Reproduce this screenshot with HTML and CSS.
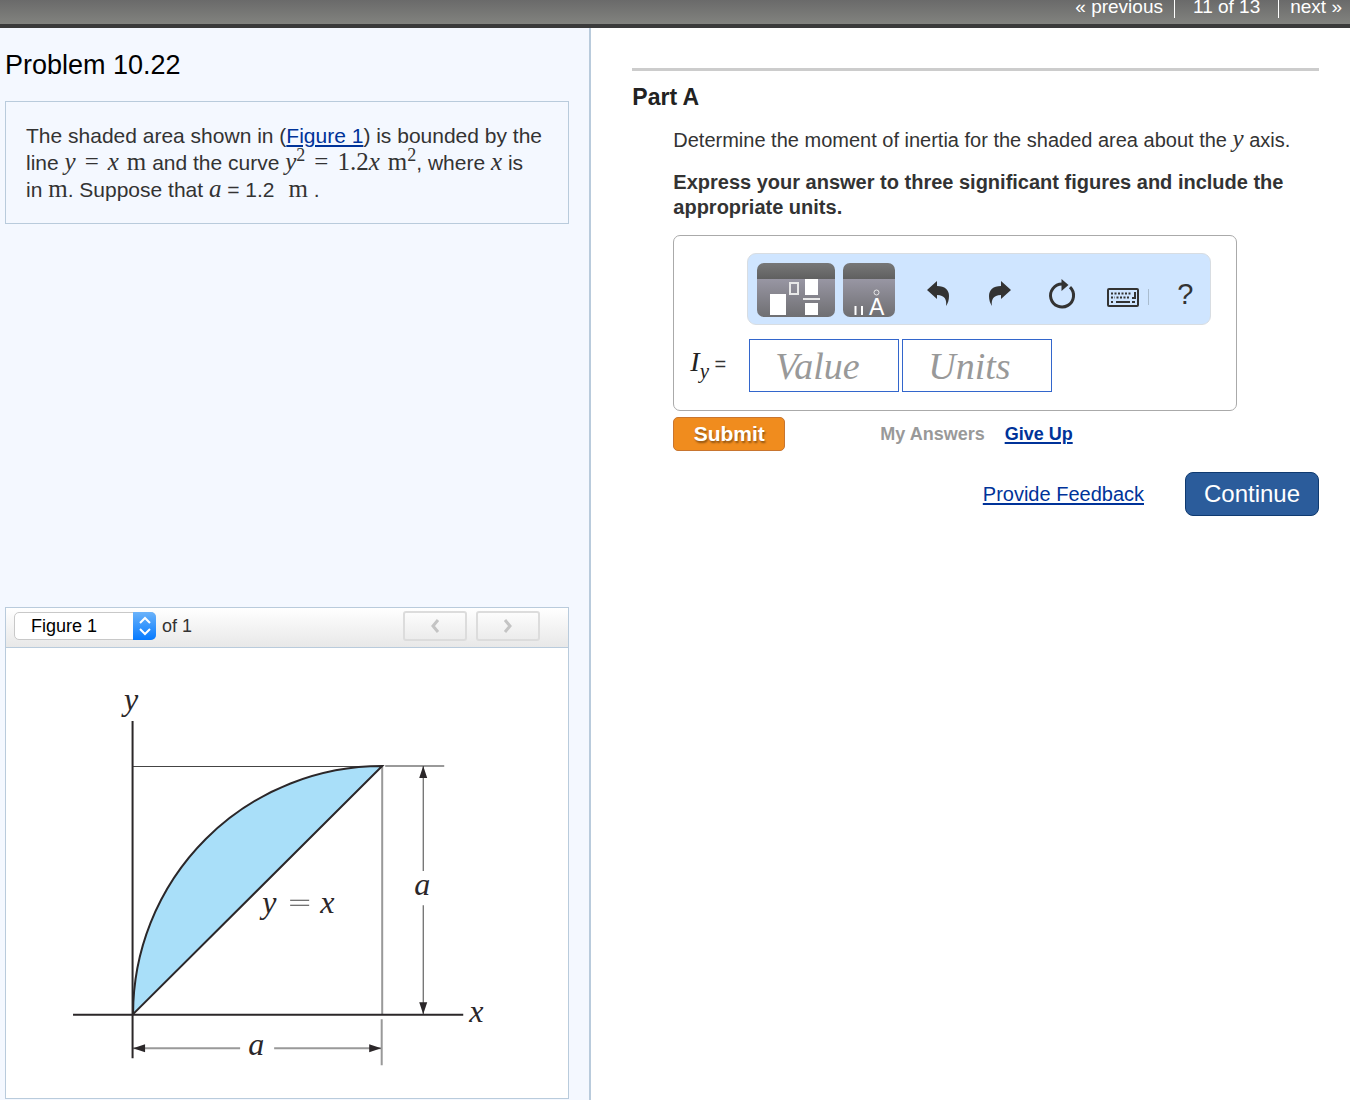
FILE: index.html
```html
<!DOCTYPE html>
<html lang="en">
  <head>
    <meta charset="UTF-8" />
    <meta name="viewport" content="width=device-width, initial-scale=1.0" />
    <title>Problem 10.22</title>
    <link rel="stylesheet" href="styles.css">
  </head>
  <body>
    <header class="top-bar">
      <nav class="pager">
        <a href="#">« previous</a>
        <span>11 of 13</span>
        <a href="#">next »</a>
      </nav>
    </header>

    <div class="layout">
      <aside class="problem-panel">
        <h1>Problem 10.22</h1>
        <div class="problem-text">
          The shaded area shown in (<a href="#figure">Figure 1</a>) is bounded by the
          line <span class="math"><i>y</i><span class="rel">=</span><i>x</i><span class="unit">m</span></span>
          and the curve <span class="math"><i>y</i><sup>2</sup><span class="rel">=</span>1.2<i>x</i><span class="unit">m</span><sup>2</sup></span>,
          where <i class="math">x</i> is in&nbsp;<span class="math">m</span>. Suppose that
          <i class="math">a</i> = 1.2 <span class="math unit">m</span> .
        </div>

        <section class="figure-box" id="figure">
          <div class="figure-bar">
            <div class="figure-select">
              <select aria-label="Figure">
                <option>Figure 1</option>
              </select>
              <svg class="select-arrows" width="23" height="28" viewBox="0 0 23 28">
                <path d="M7 11l5-5 5 5M7 17l5 5 5-5" fill="none" stroke="#fff" stroke-width="2" />
              </svg>
            </div>
            <span>of 1</span>
            <div class="figure-nav">
              <button type="button" aria-label="Previous figure" disabled>
                <svg width="12" height="14" viewBox="0 0 12 14"><path d="M9 1L4 7l5 6" /></svg>
              </button>
              <button type="button" aria-label="Next figure" disabled>
                <svg width="12" height="14" viewBox="0 0 12 14"><path d="M3 1l5 6-5 6" /></svg>
              </button>
            </div>
          </div>

          <svg class="diagram" viewBox="0 0 562 450" role="img" aria-label="Shaded area between a curve and the line y = x">
            <!-- guides -->
            <g class="guide">
              <path d="M379 118H438M376 118V366M375.500 371V417" />
              <path d="M127 400H234M268 400H375" />
            </g>
            <path class="thin" d="M127 118.500H376M417 118V223M417 257V366" />

            <!-- shaded area -->
            <path class="area" d="M127 366A249 248 0 0 1 376 118Z" />

            <!-- axes -->
            <path class="axis" d="M126.500 73V410M67 366.500H457" />

            <!-- arrow heads -->
            <path class="arrow" d="M417 118l4 12h-8zM417 366l4-12h-8zM127 400l12-4v8zM375 400l-12-4v8z" />

            <text x="118" y="62">y</text>
            <text x="463" y="374">x</text>
            <text x="408" y="247">a</text>
            <text x="242" y="407">a</text>
            <text x="256" y="265">y</text>
            <path class="thin" d="M284 252H303M284 257H303" />
            <text x="314" y="265">x</text>
          </svg>
        </section>
      </aside>

      <main class="answer-panel">
        <hr />
        <h2>Part A</h2>

        <div class="part">
          <p>Determine the moment of inertia for the shaded area about the <i class="math">y</i> axis.</p>
          <p class="instructions">Express your answer to three significant figures and include the appropriate units.</p>

          <form>
            <div class="answer-box">
              <div class="toolbar">
                <button type="button" class="tool-dark wide" aria-label="Templates">
                  <svg width="78" height="54" viewBox="0 0 78 54">
                    <path d="M13 31h16v21H13zM48 16h13v16H48zM48 40h13v12H48z" fill="#fff" />
                    <path d="M33 20h8v11h-8zM46 36h17" fill="none" stroke="#e8e8e8" stroke-width="2" />
                  </svg>
                </button>
                <button type="button" class="tool-dark" aria-label="Units">
                  <svg width="52" height="54" viewBox="0 0 52 54">
                    <path d="M12.500 43v9M19 43v9" stroke="#fff" stroke-width="2" />
                    <circle cx="33.500" cy="29.500" r="2.500" fill="none" stroke="#e8e8e8" />
                    <text x="26" y="52">A</text>
                  </svg>
                </button>
                <div class="tool-icons">
                  <button type="button" aria-label="Undo">
                    <svg width="50" height="54" viewBox="0 0 50 54">
                      <path d="M14 27L24 18v5C32 23 36 27 36 33C36 37 35 40 33 43C34 37 32 32 24 32v4Z" fill="#333" />
                    </svg>
                  </button>
                  <button type="button" aria-label="Redo">
                    <svg width="50" height="54" viewBox="0 0 50 54">
                      <path d="M36 27L26 18v5C18 23 14 27 14 33C14 37 15 40 17 43C16 37 18 32 26 32v4Z" fill="#333" />
                    </svg>
                  </button>
                  <button type="button" aria-label="Reset">
                    <svg width="50" height="54" viewBox="0 0 50 54">
                      <path d="M33 24.200A11.500 11.500 0 1 1 25 21" fill="none" stroke="#333" stroke-width="3" />
                      <path d="M24.500 16l7 6-7 6z" fill="#333" />
                    </svg>
                  </button>
                  <button type="button" class="keyboard" aria-label="Keyboard shortcuts">
                    <svg width="50" height="54" viewBox="0 0 50 54" fill="none" stroke="#333" stroke-width="2">
                      <rect x="9" y="26" width="30" height="17" rx="1" />
                      <path d="M12 30.500h21" stroke-dasharray="2 1.500" />
                      <path d="M12 34.500h4M17.500 34.500h14" stroke-dasharray="2 1.500" />
                      <path d="M33 35h3v-6" />
                      <path d="M12 39h2M17 39h14M33 39h3" />
                    </svg>
                  </button>
                  <button type="button" class="help" aria-label="Help">?</button>
                </div>
              </div>

              <div class="answer-row">
                <label for="value"><i>I<sub>y</sub></i> =</label>
                <input type="text" id="value" placeholder="Value" />
                <input type="text" id="units" placeholder="Units" aria-label="Units" />
              </div>
            </div>

            <div class="submit-row">
              <button type="submit" class="submit-button">Submit</button>
              <span class="my-answers">My Answers</span>
              <a href="#">Give Up</a>
            </div>
          </form>
        </div>

        <div class="footer-row">
          <a href="#">Provide Feedback</a>
          <button type="button" class="continue-button">Continue</button>
        </div>
      </main>
    </div>
  </body>
</html>
```
FILE: styles.css
```css
* {
  margin: 0;
  padding: 0;
  box-sizing: border-box;
}

body {
  font-family: "Liberation Sans", Arial, sans-serif;
  font-size: 20px;
  line-height: 25px;
  color: #333;
  background: white;
}

a {
  color: #039;
  text-underline-offset: 2px;
  text-decoration-thickness: 2px;
}

button {
  font-family: inherit;
  cursor: pointer;
}

svg {
  display: block;
}

.math {
  font-family: "Liberation Serif", "Times New Roman", serif;
  font-size: 25px;
  line-height: 0;
}

.math .rel {
  margin: 0 9px;
}

.math .unit,
.math.unit {
  margin-left: 8px;
}

.math sup {
  font-size: 18px;
  line-height: 0;
  vertical-align: 9px;
}

/* Top bar */
.top-bar {
  height: 28px;
  background: linear-gradient(#6a6a6a, #82837f);
  border-bottom: 4px solid #3a3a3a;
  display: flex;
  justify-content: flex-end;
}

.pager {
  display: flex;
  height: 18px;
  padding-right: 8px;
  font-size: 19px;
  line-height: 14px;
  color: white;
}

.pager a {
  color: white;
  text-decoration: none;
}

.pager span {
  margin: 0 11px;
  padding: 0 18px;
  border-left: 1px solid white;
  border-right: 1px solid white;
}

.layout {
  display: flex;
  min-height: calc(100vh - 28px);
}

/* Left panel */
.problem-panel {
  width: 43.8%;
  padding: 20px 20px 1px 5px;
  background: #f4f8ff;
  border-right: 2px solid #b9cbdc;
  display: flex;
  flex-direction: column;
}

.problem-panel h1 {
  font-size: 27px;
  font-weight: normal;
  line-height: 34px;
  color: black;
  margin-bottom: 19px;
}

.problem-text {
  padding: 20px;
  border: 1px solid #b9cbdc;
  font-size: 21px;
  line-height: 27px;
}

.figure-box {
  margin-top: auto;
  background: white;
  border: 1px solid #b9cbdc;
}

.figure-bar {
  display: flex;
  align-items: center;
  height: 40px;
  padding: 0 28px 2px 8px;
  gap: 6px;
  font-size: 18px;
  background: linear-gradient(#fff, #e8e8e8);
  border-bottom: 1px solid #b9cbdc;
}

.figure-select {
  position: relative;
}

.figure-select select {
  appearance: none;
  display: block;
  width: 142px;
  height: 28px;
  padding-left: 16px;
  font-family: inherit;
  font-size: 18px;
  color: black;
  background: white;
  border: 1px solid #c8c8c8;
  border-radius: 5px;
}

.select-arrows {
  position: absolute;
  top: 0;
  right: 0;
  background: linear-gradient(#6bb3fa, #067aff);
  border-radius: 0 5px 5px 0;
  pointer-events: none;
}

.figure-nav {
  display: flex;
  gap: 9px;
  margin-left: auto;
}

.figure-nav button {
  width: 64px;
  height: 30px;
  background: linear-gradient(#fcfcfc, #ececec);
  border: 2px solid #dcdcdc;
  border-radius: 3px;
  display: flex;
  align-items: center;
  justify-content: center;
}

.figure-nav path {
  fill: none;
  stroke: #c4c4c4;
  stroke-width: 3;
}

.diagram {
  width: 100%;
  height: auto;
}

.diagram .guide {
  stroke: #999;
  stroke-width: 2;
}

.diagram .thin {
  stroke: #444;
  stroke-width: 1;
}

.diagram .area {
  fill: #a9dff9;
  stroke: #2b2729;
  stroke-width: 2;
}

.diagram .axis {
  stroke: #2b2729;
  stroke-width: 2;
}

.diagram .arrow,
.diagram text {
  fill: #2b2729;
}

.diagram text {
  font-family: "Liberation Serif", "Times New Roman", serif;
  font-size: 32px;
  font-style: italic;
}

/* Right panel */
.answer-panel {
  flex: 1;
  padding: 40px 31px 0 41px;
}

.answer-panel hr {
  border: none;
  border-top: 3px solid #ccc;
}

.answer-panel h2 {
  margin: 13px 0 18px;
  font-size: 23px;
  line-height: 26px;
  color: #222;
}

.part {
  padding-left: 41px;
}

.part p {
  margin-bottom: 17px;
}

.part .instructions {
  font-weight: bold;
  margin-bottom: 15px;
}

.answer-box {
  max-width: 564px;
  padding: 17px 25px 18px 16px;
  border: 1px solid #aaa;
  border-radius: 7px;
}

.toolbar {
  display: flex;
  height: 72px;
  margin: 0 0 14px 57px;
  padding: 9px 0 8px 9px;
  gap: 8px;
  background: #cfe5ff;
  border: 1px solid #d8dde2;
  border-radius: 9px;
}

.tool-dark {
  width: 52px;
  height: 54px;
  background: linear-gradient(#777, #606060 16px, #9896a3 16px, #6f6f72);
  border: none;
  border-radius: 7px;
}

.tool-dark.wide {
  width: 78px;
}

.tool-dark text {
  font-size: 23px;
  fill: white;
}

.tool-icons {
  display: flex;
  gap: 12px;
  margin-left: 10px;
}

.tool-icons button {
  width: 50px;
  height: 54px;
  background: none;
  border: none;
}

.tool-icons .keyboard {
  background: linear-gradient(#a9bccf, #a9bccf) right 26px / 1px 16px no-repeat;
}

.tool-icons .help {
  width: 48px;
  padding-top: 8px;
  font-size: 29px;
  color: #333;
}

.answer-row {
  display: flex;
  align-items: center;
  gap: 3px;
}

.answer-row label {
  width: 56px;
}

.answer-row label i {
  font-family: "Liberation Serif", "Times New Roman", serif;
  font-size: 28px;
  color: #222;
}

.answer-row sub {
  font-size: 21px;
  line-height: 1;
}

.answer-row input {
  width: 150px;
  height: 53px;
  padding-left: 25px;
  font-family: "Liberation Serif", "Times New Roman", serif;
  font-size: 38px;
  font-style: italic;
  border: 1px solid #36c;
}

.answer-row input::placeholder {
  color: #999;
}

.submit-row {
  display: flex;
  align-items: center;
  margin-top: 6px;
  font-size: 18px;
  font-weight: bold;
}

.submit-button {
  width: 112px;
  height: 34px;
  font-size: 21px;
  font-weight: bold;
  color: white;
  text-shadow: 1px 2px 2px rgba(0, 0, 0, 0.4);
  background: #f08c1e;
  border: 1px solid #c8752f;
  border-radius: 5px;
}

.my-answers {
  margin: 0 20px 0 95px;
  color: #999;
}

.footer-row {
  display: flex;
  justify-content: flex-end;
  align-items: center;
  gap: 41px;
  margin-top: 21px;
}

.continue-button {
  width: 134px;
  height: 44px;
  font-size: 24px;
  color: white;
  background: #2b5c9b;
  border: 1px solid #0f3a70;
  border-radius: 8px;
}
```
